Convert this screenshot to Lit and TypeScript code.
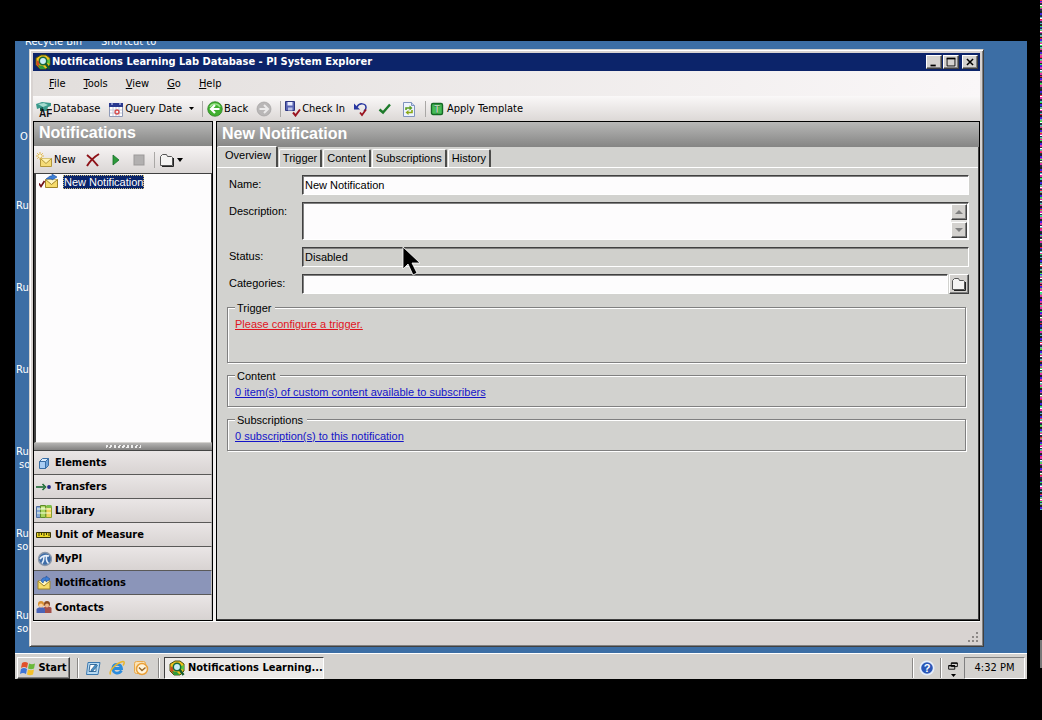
import { LitElement, html, css, svg, nothing } from "lit";
import { customElement, property } from "lit/decorators.js";
import { classMap } from "lit/directives/class-map.js";

const envelope = svg`<path d="M2 6h12v8H2z" fill="#f7dc6a" stroke="#a08428"/><path d="M2 6l6 5 6-5" fill="#fff6c0" stroke="#a08428"/>`;

const icons: Record<string, unknown> = {
  app: svg`<path d="M1 4l5-3h5l4 3v7l-4 4H5l-4-4z" fill="#f2c21b" stroke="#4c5210"/><path d="M1.500 6l3 2v6l-3-3z" fill="#d3491f"/><path d="M5 15l-2-4 5 1 3 3z" fill="#2f9a3a"/><path d="M12 6l3-1v5l-3-1z" fill="#5fc43c"/><circle cx="8" cy="7" r="3.700" fill="#c9eef7" stroke="#176a3a" stroke-width="1.500"/><path d="M10.500 9.500l4 5.500" stroke="#155c2c" stroke-width="2.400"/>`,
  database: svg`<path d="M0 3l6-2 9 1v3l-3 1-1 4H4V7L1 8z" fill="#3c9a8c"/><path d="M2 3l6-1 4 2-5 2z" fill="#a5dcd0"/><path d="M4 7l3-1v4H4z" fill="#14594f"/><text x="3" y="16" font-family="Liberation Sans" font-size="10" font-weight="bold" fill="#111">AF</text>`,
  calendar: svg`<path d="M1.500 3.500h13v12h-13z" fill="#fff" stroke="#8f9ab8"/><path d="M1 2h14v4H1z" fill="#28388e"/><path d="M4 1v3M12 1v3" stroke="#dce3ff"/><path d="M2 9h12M2 12h12M5 6v9M8 6v9M11 6v9" stroke="#c6cbdc"/><circle cx="9" cy="11" r="2" fill="none" stroke="#d64949" stroke-width="1.300"/>`,
  back: svg`<circle cx="8" cy="8" r="7.300" fill="#3faf2e" stroke="#2a7a20" stroke-width=".7"/><path d="M3 6a5.500 5 0 0 1 10 0" fill="none" stroke="#9be38a" stroke-width="1.500"/><path d="M12.500 8H4.500M8 4L4 8l4 4" fill="none" stroke="#fff" stroke-width="2.200"/>`,
  forward: svg`<circle cx="8" cy="8" r="7" fill="#b9b7b7" stroke="#a2a0a0" stroke-width=".7"/><path d="M3.500 8h8M8 4l4 4-4 4" fill="none" stroke="#ecebeb" stroke-width="2"/>`,
  checkin: svg`<path d="M.5.500h9v9h-9z" fill="#5a65b4" stroke="#2d3680"/><path d="M2.500 1h5v3.500h-5z" fill="#e8ecff"/><path d="M3 6.500h4.500v3H3z" fill="#b9c0e6"/><path d="M8 11.500l2.500 3L15 8.500" fill="none" stroke="#9a1420" stroke-width="2"/>`,
  undo: svg`<path d="M4 6c2-4.500 9-4 9 .5 0 2-1 2.500-2 3.500" fill="none" stroke="#2736a0" stroke-width="1.500"/><path d="M1 2.500v6h6z" fill="#2736a0"/><path d="M7 11.500l2 2.500 4-5.500" fill="none" stroke="#9a1420" stroke-width="1.800"/>`,
  tick: svg`<path d="M2.500 8.500L6 11.500l7-8" fill="none" stroke="#1d7a2a" stroke-width="2.400"/>`,
  refresh: svg`<path d="M2.500 1.500h8l3 3v11h-11z" fill="#eef3fd" stroke="#7f93bd"/><path d="M10.500 1.500v3h3" fill="#c6d4ef" stroke="#7f93bd"/><path d="M5 9V7h4" fill="none" stroke="#5a9e1e" stroke-width="1.600"/><path d="M8.500 4.500L11.500 7l-3 2.500z" fill="#5a9e1e"/><path d="M11 9v2.500H7" fill="none" stroke="#8aa814" stroke-width="1.600"/><path d="M7.500 9L4.500 11.500l3 2.500z" fill="#8aa814"/>`,
  template: svg`<rect x="1.500" y="2.500" width="11" height="11" rx="1.500" fill="#45bd56" stroke="#156824" stroke-width="1.400"/><text x="7" y="12" text-anchor="middle" font-family="Liberation Sans" font-size="10" font-weight="bold" fill="#e9ffe6" stroke="#0f5a1e" stroke-width=".4">T</text>`,
  newitem: svg`<path d="M4.500 6.500h11v8h-11z" fill="#f5dc78" stroke="#b3973a"/><path d="M4.500 6.500l5.500 5 5.500-5" fill="#fff3b4" stroke="#b3973a"/><path d="M4 0v8M0 4h8M1.200 1.200l5.600 5.600M6.800 1.200L1.200 6.800" stroke="#e2b84a" stroke-width="1"/><circle cx="4" cy="4" r="1.500" fill="#fff7cf"/>`,
  remove: svg`<path d="M2 3c4 3 8 7 11 11M14 2C9 5 5 9 2 14" fill="none" stroke="#8e1218" stroke-width="2"/>`,
  play: svg`<path d="M5 3l6 5-6 5z" fill="#2c9a3a" stroke="#17702a" stroke-width=".8"/>`,
  stop: svg`<rect x="3" y="3" width="10" height="10" fill="#b2b0b0" stroke="#9b9999"/>`,
  folder: svg`<path d="M1.500 4.500l2-2h4l1 2h4l1 1v8h-12z" fill="#f4f3f2" stroke="#555"/><path d="M3 14.500h11.500V6" fill="none" stroke="#222"/>`,
  envelope: svg`${envelope}<path d="M5 6c1-3 3-4 5-3V1l4 3-4 3V5C8 5 8 6 7 8z" fill="#3d7fd6" stroke="#1f4f9c" stroke-width=".6"/>`,
  checkmail: svg`<path d="M0 9.500l2 3L5.500 7" fill="none" stroke="#701018" stroke-width="1.700"/><path d="M6.500 5.500h12v8h-12z" fill="#f7dc6a" stroke="#a08428"/><path d="M6.500 5.500l6 5 6-5" fill="#fff6c0" stroke="#a08428"/><path d="M7 5l4-3h2V0l5 3-5 3V5z" fill="#3d7fd6" stroke="#1f4f9c" stroke-width=".6"/>`,
  elements: svg`<path d="M3.500 6.500h6v7h-6z" fill="#a9cdf3" stroke="#3a6ea5"/><path d="M3.500 6.500l3-3h6l-3 3z" fill="#dcecfc" stroke="#3a6ea5"/><path d="M9.500 6.500l3-3v7l-3 3z" fill="#6fa3da" stroke="#3a6ea5"/>`,
  transfers: svg`<path d="M0 8h8" stroke="#1b6b34" stroke-width="1.600"/><path d="M6.500 5L9.500 8l-3 3" fill="none" stroke="#1b6b34" stroke-width="1.500"/><circle cx="13" cy="8" r="1.900" fill="#232a86"/>`,
  library: svg`<path d="M.5 3.500h4v11h-4z" fill="#87a8d8" stroke="#4f6f9f"/><path d="M4.500 2.500h5v12h-5z" fill="#a8d45c" stroke="#5f8c2a"/><path d="M10 3.500h5.500v11H10z" fill="#f0d45c" stroke="#8aa02e"/><path d="M1 6h14M5 5h4M1 10h14" stroke="#f6ffdc"/><path d="M10.500 2h5v3h-5z" fill="#7ec04a"/>`,
  measure: svg`<path d="M.5 5.500h14v5H.5z" fill="#e8d524" stroke="#3a3606"/><path d="M3 6v3M5.500 6v2M8 6v3M10.500 6v2M13 6v3" stroke="#3a3606"/>`,
  mypi: svg`<circle cx="9" cy="8" r="6.500" fill="#3d6ca8" stroke="#8c98aa" stroke-width="1.400"/><path d="M4 8c2-3 5-4 9-3M8 5.500c0 3-.5 5-2 7M10.500 5.500c-.5 3 0 5 2 7" fill="none" stroke="#e6effa" stroke-width="1.500"/>`,
  contacts: svg`<circle cx="11" cy="4" r="3" fill="#8a4a20"/><path d="M7 13V8c2-2 7-2 8.500 0v5z" fill="#a5504a"/><circle cx="11" cy="5.500" r="2" fill="#f0b98a"/><circle cx="5" cy="4" r="3" fill="#d89030"/><path d="M.5 13V9c2-2.500 7-2.500 8.500 0v4z" fill="#4a64b8"/><circle cx="5" cy="5.500" r="2" fill="#f8cfa0"/>`,
  windows: svg`<path d="M2 3c2-1.500 4-1.500 6 0L7 8C5 6.500 3 6.500 1 8z" fill="#e0502a"/><path d="M9 3.500c2 1 4 1 6 0l-1 5c-2 1-4 1-6 0z" fill="#6ab83a"/><path d="M1 9c2-1.500 4-1.500 6 0l-1 5c-2-1.500-4-1.500-6 0z" fill="#3c74d8"/><path d="M8 9.500c2 1 4 1 6 0l-1 5c-2 1-4 1-6 0z" fill="#f4c02a"/>`,
  desktop: svg`<path d="M3 2.500h12l-2 12H1.500z" fill="#b8daf2" stroke="#3a78b0"/><path d="M5 4.500h6v7H4z" fill="#fff" stroke="#3b6e9c"/><path d="M6 10l5-6 1.500 1.500L8 11l-2 .5z" fill="#4a90c8" stroke="#24557e" stroke-width=".6"/>`,
  ie: svg`<path d="M12.500 10.500c-3 4.500-9 3-8.500-2.500C4.500 3 12 3 12.500 8.500H5.500" fill="none" stroke="#2a8bdc" stroke-width="2.800"/><path d="M1.500 14.500C-.5 11 7 3 14 1.500c2 0 1 3 0 4" fill="none" stroke="#eab52a" stroke-width="1.500"/>`,
  outlook: svg`<rect x="1.500" y="1.500" width="11" height="12" rx="2" fill="#fbe2b4" stroke="#e9a94a"/><circle cx="9" cy="9" r="5.500" fill="#fff4dc" stroke="#e9a03a" stroke-width="1.500"/><path d="M6 7.500L9 10.500l3.500-3" fill="none" stroke="#9a6a2a" stroke-width="1.500"/>`,
  help: svg`<circle cx="8" cy="8" r="7.500" fill="#e6eefb"/><circle cx="8" cy="8" r="5.800" fill="#2a57b8"/><text x="8" y="12" text-anchor="middle" font-family="Liberation Sans" font-size="11" font-weight="bold" fill="#fff">?</text>`,
  restore: svg`<path d="M6 3.500h7v4H6zM3 6.500h7v4H3z" fill="#d4d2cf" stroke="#000"/><path d="M6 3.500h7M3 6.500h7" stroke="#000" stroke-width="1.500"/>`,
  minimize: svg`<path d="M4 12h6" stroke="#000" stroke-width="2"/>`,
  maximize: svg`<path d="M3.500 4h9v8.500h-9z" fill="none" stroke="#000"/><path d="M3 4h10" stroke="#000" stroke-width="2"/>`,
  close: svg`<path d="M4.500 4.500l7 7M11.500 4.500l-7 7" stroke="#000" stroke-width="1.700"/>`,
};

const icon = (name: string, size = 16, width = size) =>
  html`<svg width=${width} height=${size} viewBox="0 0 ${(16 * width) / size} 16" aria-hidden="true">${icons[name]}</svg>`;

const reset = css`
  * { box-sizing: border-box; }
  button {
    font: inherit;
    color: inherit;
    background: none;
    border: 0;
    border-radius: 0;
    padding: 0;
    margin: 0;
    display: inline-flex;
    align-items: center;
    white-space: nowrap;
  }
  svg { display: block; flex: none; }
`;

const bevel = css`
  .bevel {
    background: #d4d2cf;
    border: 1px solid;
    border-color: #fff #404040 #404040 #fff;
    box-shadow: inset -1px -1px 0 #808080;
    justify-content: center;
  }
`;

@customElement("nav-pane")
class NavPane extends LitElement {
  @property() selected = "Notifications";

  private items = [
    ["elements", "Elements"],
    ["transfers", "Transfers"],
    ["library", "Library"],
    ["measure", "Unit of Measure"],
    ["mypi", "MyPI"],
    ["envelope", "Notifications"],
    ["contacts", "Contacts"],
  ];

  static styles = [reset, css`
    :host { display: flex; flex-direction: column; border: 1px solid #000; background: #d4d2cf; min-height: 0; }
    .head {
      height: 24px; padding: 0 5px; margin: 0; color: #fff;
      font: bold 16px/21px "Liberation Sans", Arial, sans-serif;
      background: linear-gradient(#b8b8b7, #858584);
    }
    .tools { display: flex; align-items: center; height: 27px; padding: 0 2px; background: linear-gradient(#f6f3f3, #dad6d5); }
    .tools button { gap: 2px; margin-right: 7px; }
    .tools button:first-child { margin-right: 9px; }
    .sep { width: 1px; height: 16px; background: #aaa8a6; margin-right: 4px; }
    .tree {
      flex: 1; margin: 0; padding: 0 3px; list-style: none; background: #fdfcfd;
      border: 1px solid #404040; border-left-width: 2px; border-bottom-color: #d4d2cf;
      font: 11px/14px "Liberation Sans", Arial, sans-serif;
    }
    .tree li { display: flex; align-items: center; gap: 4px; height: 16px; }
    .node { background: #0a246a; color: #fff; padding: 0 1px; outline: 1px dotted #c8b878; outline-offset: -1px; }
    .split { height: 8px; background: linear-gradient(#b4b3b2, #838281); display: flex; justify-content: center; align-items: center; border-bottom: 1px solid #444; }
    .grip { width: 35px; height: 3px; background: repeating-linear-gradient(110deg, #eee 0 2px, #949392 2px 4px); }
    .nav { display: flex; flex-direction: column; margin-bottom: 1px; }
    .nav button {
      height: 24px; gap: 3px; padding: 1px 2px 0; font-weight: bold;
      background: linear-gradient(#eae6e6, #d8d3d2); border-bottom: 1px solid #5a5958; border-right: 1px solid #c0bebc;
    }
    .nav button.on { background: #8b95b9; }
    .nav button:last-child { border-bottom: 0; }
  `];

  render() {
    return html`
      <h2 class="head">Notifications</h2>
      <div class="tools">
        <button>${icon("newitem")}New</button>
        <button aria-label="Delete">${icon("remove")}</button>
        <button aria-label="Start">${icon("play")}</button>
        <button aria-label="Stop">${icon("stop")}</button>
        <span class="sep"></span>
        <button aria-label="Folder">${icon("folder")}<svg width="6" height="4"><path d="M0 0h6L3 4z"/></svg></button>
      </div>
      <ul class="tree">
        <li>${icon("checkmail", 16, 20)}<span class="node">New Notification</span></li>
      </ul>
      <div class="split"><span class="grip"></span></div>
      <nav class="nav">
        ${this.items.map(([glyph, label]) => html`
          <button class=${classMap({ on: label === this.selected })}>${icon(glyph)}${label}</button>`)}
      </nav>`;
  }
}

@customElement("notification-editor")
class NotificationEditor extends LitElement {
  static styles = [reset, bevel, css`
    :host {
      display: flex; flex-direction: column; min-width: 0; background: #d2d2cf;
      border: 1px solid #000; box-shadow: inset -1px -1px 0 #404040;
      font: 11px/13px "Liberation Sans", Arial, sans-serif;
    }
    .head {
      height: 25px; padding: 0 5px; margin: 0; color: #fff;
      font: bold 16px/23px "Liberation Sans", Arial, sans-serif;
      background: linear-gradient(#b8b8b7, #858584);
    }
    .tabs { display: flex; align-items: flex-end; height: 21px; margin-right: 1px; border-bottom: 1px solid #fff; }
    .tab {
      height: 18px; padding: 0 3px; border-top: 1px solid #fff; border-left: 1px solid #fff;
      border-right: 2px solid #4c4c4a; border-radius: 2px 2px 0 0; margin-right: 1px;
    }
    .tab.on { height: 21px; padding: 0 5px 3px 8px; border-left: 0; }
    .form { display: grid; grid-template-columns: 73px 1fr; row-gap: 7px; padding: 7px 10px 6px 12px; }
    label { padding-top: 3px; }
    .sunken {
      font: inherit; width: 100%; min-width: 0; height: 20px; margin: 0; padding: 0 2px; color: #000; background: #fdfcfd;
      border: 1px solid; border-color: #404040 #fff #fff #404040; border-radius: 0;
      box-shadow: inset 1px 1px 0 #808080; outline: none; resize: none; display: block;
    }
    .sunken[readonly] { background: #d0d0cc; }
    .area { display: flex; height: 38px; padding: 1px; }
    .area textarea { flex: 1; border: 0; padding: 2px; background: none; resize: none; outline: none; font: inherit; overflow: hidden; }
    .scroll { display: flex; flex-direction: column; justify-content: space-between; background: #e6e5e3; }
    .scroll button { width: 16px; height: 16px; }
    .pick { display: flex; gap: 1px; }
    .pick button { width: 20px; height: 20px; flex: none; }
    .groups { display: grid; gap: 5px; padding: 0 13px 0 10px; }
    fieldset { margin: 0; padding: 3px 7px 0; min-width: 0; height: 39px; border: 1px solid #808080; box-shadow: 1px 1px 0 #fff, inset 1px 1px 0 #fff; }
    fieldset.tall { height: 63px; }
    legend { padding: 2px 4px 0 2px; background: #d2d2cf; }
    a { color: #1414c8; text-decoration: underline; display: block; width: max-content; }
    a.alert { color: #e0141e; }
  `];

  render() {
    const tabs = ["Overview", "Trigger", "Content", "Subscriptions", "History"];
    const groups = [
      ["Trigger", "Please configure a trigger."],
      ["Content", "0 item(s) of custom content available to subscribers"],
      ["Subscriptions", "0 subscription(s) to this notification"],
    ];
    return html`
      <h2 class="head">New Notification</h2>
      <div class="tabs" role="tablist">
        ${tabs.map((t, i) => html`<button role="tab" class=${classMap({ tab: true, on: i === 0 })}>${t}</button>`)}
      </div>
      <div class="form">
        <label for="name">Name:</label>
        <input id="name" class="sunken" .value=${"New Notification"}>
        <label for="desc">Description:</label>
        <div class="sunken area">
          <textarea id="desc"></textarea>
          <div class="scroll">
            <button class="bevel" aria-label="Scroll up"><svg width="8" height="4"><path d="M0 4h8L4 0z" fill="#808080"/></svg></button>
            <button class="bevel" aria-label="Scroll down"><svg width="8" height="4"><path d="M0 0h8L4 4z" fill="#808080"/></svg></button>
          </div>
        </div>
        <label for="status">Status:</label>
        <input id="status" class="sunken" readonly .value=${"Disabled"}>
        <label for="cats">Categories:</label>
        <div class="pick">
          <input id="cats" class="sunken">
          <button class="bevel" aria-label="Choose categories">${icon("folder")}</button>
        </div>
      </div>
      <div class="groups">
        ${groups.map(([name, text], i) => html`
          <fieldset class=${classMap({ tall: i === 0 })}>
            <legend>${name}</legend>
            <a href="#" class=${classMap({ alert: i === 0 })}>${text}</a>
          </fieldset>`)}
      </div>`;
  }
}

@customElement("explorer-window")
class ExplorerWindow extends LitElement {
  static styles = [reset, bevel, css`
    :host {
      display: flex; flex-direction: column; position: relative; padding: 3px; background: #d8d3d1;
      border: 1px solid; border-color: #d4d2cf #404040 #404040 #d4d2cf;
      box-shadow: inset 1px 1px 0 #fff, inset -1px -1px 0 #808080;
    }
    .title { display: flex; align-items: center; height: 18px; padding: 0 2px; gap: 1px; background: #0c246a; color: #fff; font-weight: bold; }
    .title .name { flex: 1; }
    .title button { width: 16px; height: 14px; }
    .title button:last-child { margin-left: 2px; }
    .menu { display: flex; align-items: center; gap: 18px; height: 25px; padding: 1px 16px 0; background: linear-gradient(90deg, #e2dedc, #faf7f8); }
    .tools { display: flex; align-items: center; height: 25px; padding: 0 3px; background: linear-gradient(#faf8f8, #dcd8d6); }
    .tools button { gap: 1px; margin-right: 8px; }
    .sep { width: 1px; height: 16px; background: #aaa8a6; margin-right: 4px; }
    .caret { margin-left: 6px; }
    .panes { flex: 1; display: grid; grid-template-columns: 180px minmax(0, 1fr); gap: 3px; background: #f2f0ef; border-bottom: 1px solid #fff; }
    .status { height: 21px; display: flex; justify-content: flex-end; align-items: flex-end; padding: 0 1px; background: #d8d3d1; }
  `];

  private tool(glyph: string, label: string, caret = false) {
    return html`<button aria-label=${label}>${icon(glyph)}${["Undo", "Apply", "Refresh", "Forward"].includes(label) ? nothing : label}${caret
      ? html`<svg class="caret" width="5" height="3"><path d="M0 0h5L2.500 3z"/></svg>` : nothing}</button>`;
  }

  render() {
    return html`
      <header class="title">
        ${icon("app")}<span class="name">Notifications Learning Lab Database - PI System Explorer</span>
        <button class="bevel" aria-label="Minimize">${icon("minimize", 14)}</button>
        <button class="bevel" aria-label="Maximize">${icon("maximize", 14)}</button>
        <button class="bevel" aria-label="Close">${icon("close", 14)}</button>
      </header>
      <div class="menu">
        ${["File", "Tools", "View", "Go", "Help"].map((m) => html`<button><span><u>${m[0]}</u>${m.slice(1)}</span></button>`)}
      </div>
      <div class="tools">
        ${this.tool("database", "Database")}${this.tool("calendar", "Query Date", true)}
        <span class="sep"></span>
        ${this.tool("back", "Back")}${this.tool("forward", "Forward")}
        <span class="sep"></span>
        ${this.tool("checkin", "Check In")}${this.tool("undo", "Undo")}${this.tool("tick", "Apply")}${this.tool("refresh", "Refresh")}
        <span class="sep"></span>
        ${this.tool("template", "Apply Template")}
      </div>
      <div class="panes">
        <nav-pane></nav-pane>
        <notification-editor></notification-editor>
      </div>
      <footer class="status">
        <svg width="12" height="12"><path d="M9 1h2v2H9zM5 5h2v2H5zM9 5h2v2H9zM1 9h2v2H1zM5 9h2v2H5zM9 9h2v2H9z" fill="#8c8886"/></svg>
      </footer>`;
  }
}

@customElement("app-root")
class AppRoot extends LitElement {
  private labels: [number, number, string][] = [
    [25, 35, "Recycle Bin"], [101, 35, "Shortcut to"], [20, 130, "O"],
    [16, 199, "Ru"], [16, 281, "Ru"], [16, 363, "Ru"],
    [16, 445, "Ru"], [19, 458, "so"], [16, 527, "Ru"], [17, 540, "so"], [16, 609, "Ru"], [17, 622, "so"],
  ];

  static styles = [reset, bevel, css`
    :host {
      display: flex; position: relative; min-height: 100vh; padding: 41px 15px; box-sizing: border-box; background: #000; color: #000;
      font: 11px/14px "DejaVu Sans Condensed", Tahoma, sans-serif;
    }
    .screen { flex: 1; display: flex; flex-direction: column; min-width: 0; position: relative; overflow: hidden; }
    .wall { flex: 1; display: flex; padding: 8px 43px 6px 14px; background: #3c6ea5; }
    explorer-window { flex: 1; min-width: 0; }
    .label { position: absolute; color: #fff; }
    .bar { display: flex; align-items: center; height: 26px; padding: 3px 2px 0; background: #d4d2cf; border-top: 1px solid #fff; }
    .bar button { height: 22px; }
    .start { width: 53px; font-weight: bold; gap: 2px; }
    .sep { width: 2px; height: 20px; border-left: 1px solid #8a8886; background: #fff; }
    .quick { display: flex; gap: 8px; padding: 0 9px 0 6px; }
    .task {
      width: 160px; gap: 3px; padding: 0 4px; font-weight: bold;
      background: #eceae8; border: 1px solid; border-color: #404040 #fff #fff #404040;
    }
    .first { margin-left: 7px; }
    .second { margin-right: 4px; }
    .tray { display: flex; align-items: center; margin-left: auto; gap: 5px; }
    .stack { display: flex; flex-direction: column; align-items: center; width: 12px; }
    .clock { border: 1px solid; border-color: #808080 #fff #fff #808080; height: 22px; width: 61px; display: flex; align-items: center; justify-content: center; }
    .noise {
      position: absolute; right: 0; top: 0; width: 2px; height: 510px;
      background:
        repeating-linear-gradient(#e24 0 1px, transparent 1px 7px, #3e5 7px 8px, transparent 8px 19px),
        repeating-linear-gradient(#42d 0 2px, transparent 2px 5px, #fff 5px 6px, transparent 6px 11px, #222 11px 13px),
        repeating-linear-gradient(#8a6 0 1px, #d3a 1px 3px, #234 3px 5px, #5bc 5px 6px);
    }
    .thumb { position: absolute; right: 0; top: 640px; width: 2px; height: 28px; background: #777; }
    .cursor { position: absolute; left: 402px; top: 246px; }
  `];

  render() {
    return html`
      <div class="screen">
        <div class="wall">
          ${this.labels.map(([x, y, t]) => html`<span class="label" style="left:${x - 15}px;top:${y - 41}px">${t}</span>`)}
          <explorer-window></explorer-window>
        </div>
        <div class="bar">
          <button class="start bevel">${icon("windows")}Start</button>
          <span class="sep first"></span>
          <div class="quick">
            <button aria-label="Show desktop">${icon("desktop")}</button>
            <button aria-label="Browser">${icon("ie")}</button>
            <button aria-label="Mail">${icon("outlook")}</button>
          </div>
          <span class="sep second"></span>
          <button class="task">${icon("app")}Notifications Learning...</button>
          <div class="tray">
            <span class="sep"></span>
            <button aria-label="Help">${icon("help")}</button>
            <span class="sep"></span>
            <div class="stack">${icon("restore", 14)}<svg width="5" height="3"><path d="M0 0h5L2.500 3z"/></svg></div>
            <div class="clock">4:32 PM</div>
          </div>
        </div>
      </div>
      <div class="noise"></div>
      <div class="thumb"></div>
      <svg class="cursor" width="20" height="32" viewBox="0 0 20 32"><path d="M1 1v22l5-5 5 11 4-2-5-10h8z" stroke="#fff" stroke-width=".8"/></svg>`;
  }
}
